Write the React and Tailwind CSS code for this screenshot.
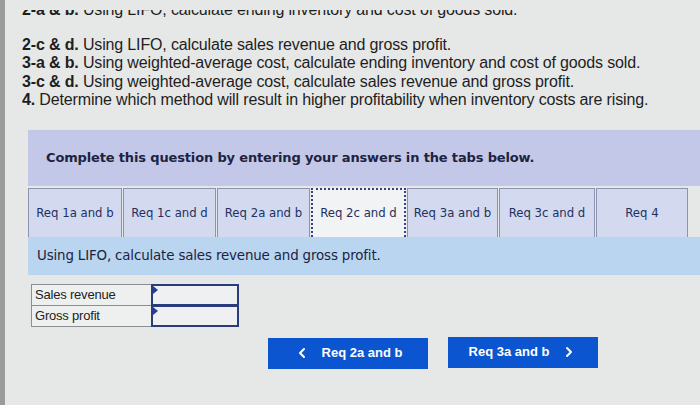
import { ChevronLeft, ChevronRight } from "lucide-react";

const tabs = [
  { label: "Req 1a and b", w: "w-[94px]" },
  { label: "Req 1c and d", w: "w-[93px]" },
  { label: "Req 2a and b", w: "w-[93px]" },
  { label: "Req 2c and d", w: "w-[95px]", active: true },
  { label: "Req 3a and b", w: "w-[91px]" },
  { label: "Req 3c and d", w: "w-[96px]" },
  { label: "Req 4", w: "w-[92px]" },
];

function Line({ lead, text }) {
  return (
    <p className="leading-[18.4px] whitespace-nowrap">
      <span className="font-bold">{lead}</span> {text}
    </p>
  );
}

export default function App() {
  return (
    <div className="w-[700px] h-[405px] overflow-hidden bg-[#e6e8e7] border-l-[5px] border-[#9a9c9b] font-['Liberation_Sans',Arial,sans-serif]">
      {/* Requirement list */}
      <div className="pl-[17px] text-[16px] text-[#1e1e1e] tracking-[-0.15px]">
        {/* first line is cut off by the screen edge */}
        <div className="mt-[10px] h-[10px] overflow-hidden">
          <div className="-mt-[9px]">
            <Line lead="2-a & b." text="Using LIFO, calculate ending inventory and cost of goods sold." />
          </div>
        </div>
        <div className="mt-[16px]">
          <Line lead="2-c & d." text="Using LIFO, calculate sales revenue and gross profit." />
          <Line lead="3-a & b." text="Using weighted-average cost, calculate ending inventory and cost of goods sold." />
          <Line lead="3-c & d." text="Using weighted-average cost, calculate sales revenue and gross profit." />
          <Line lead="4." text="Determine which method will result in higher profitability when inventory costs are rising." />
        </div>
      </div>

      {/* Instruction bar */}
      <div className="ml-[23px] mt-[20px] h-[56px] bg-[#c3c8e8] flex items-center pl-[18px]">
        <span className="font-['DejaVu_Sans',Verdana,sans-serif] font-bold text-[13px] text-[#1d2340] tracking-[-0.15px]">
          Complete this question by entering your answers in the tabs below.
        </span>
      </div>

      {/* Tabs */}
      <div className="ml-[23px] mt-[2px] flex items-stretch h-[49px]">
        {tabs.map((t) => (
          <div
            key={t.label}
            className={`${t.w} mr-[1px] flex items-center justify-center font-['DejaVu_Sans_Condensed','DejaVu_Sans',sans-serif] text-[13px] text-[#233060] ${
              t.active
                ? "bg-[#f1f3f4] border-2 border-dotted border-[#34408a] border-b-0"
                : "bg-[#d3daf0] border border-[#8d94b0] border-b-0"
            }`}
          >
            {t.label}
          </div>
        ))}
      </div>

      {/* Tab content */}
      <div className="ml-[23px] h-[38px] bg-[#b9d5f0] flex items-center pl-[9px]">
        <span className="font-['DejaVu_Sans',Verdana,sans-serif] text-[13.4px] text-[#1d2340] tracking-[-0.15px]">
          Using LIFO, calculate sales revenue and gross profit.
        </span>
      </div>

      <div className="ml-[26px] mt-[9px] w-[208px] text-[13px] text-[#222] tracking-[-0.2px]">
        {["Sales revenue", "Gross profit"].map((r, i) => (
          <div key={r} className={`flex h-[22px] ${i === 0 ? "" : "-mt-[1px]"}`}>
            <div className="w-[121px] border border-[#8a8f93] bg-[#eef0f0] pl-[3px] flex items-center">{r}</div>
            <div className="relative flex-1 border-2 border-[#2a3c7c] bg-[#eef0f1] -ml-[1px]">
              <span className="absolute left-0 top-0 w-0 h-0 border-t-[4px] border-b-[4px] border-l-[5px] border-t-transparent border-b-transparent border-l-[#1f3fa0]" />
            </div>
          </div>
        ))}
      </div>

      {/* Navigation buttons */}
      <div className="flex mt-[11px] ml-[263px] gap-[20px] font-['Liberation_Sans',Arial,sans-serif] font-bold text-[13px] text-white">
        <button className="w-[160px] h-[31px] bg-[#0c55d0] flex items-center justify-center gap-[12px]">
          <ChevronLeft size={16} strokeWidth={3} />
          <span>Req 2a and b</span>
        </button>
        <button className="w-[150px] h-[31px] -mt-[1px] bg-[#0c55d0] flex items-center justify-center gap-[12px]">
          <span>Req 3a and b</span>
          <ChevronRight size={16} strokeWidth={3} />
        </button>
      </div>
    </div>
  );
}
